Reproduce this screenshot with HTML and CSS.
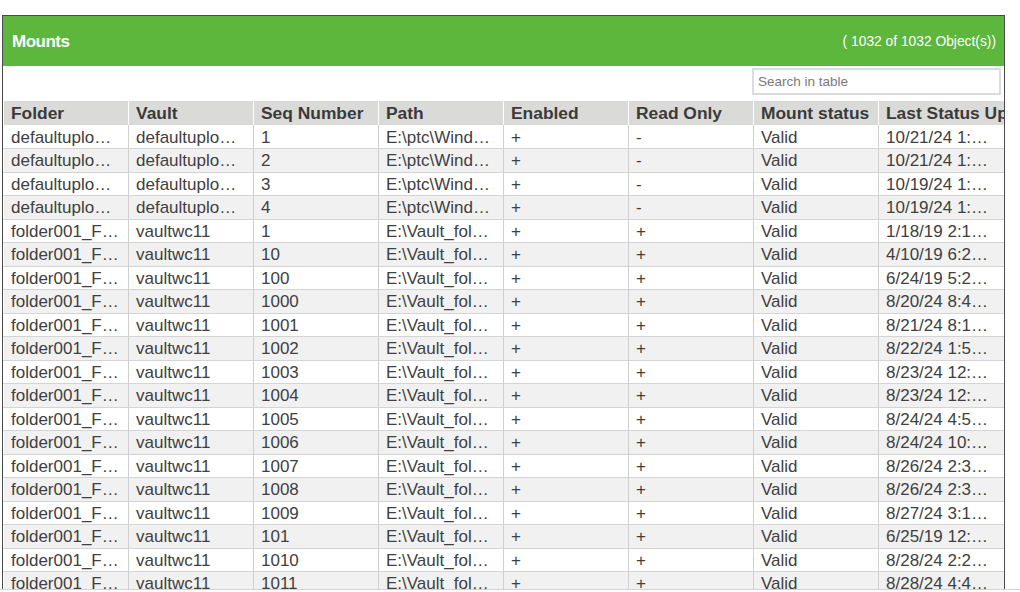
FILE: index.html
```html
<!DOCTYPE html>
<html>
<head>
<meta charset="utf-8">
<link rel="stylesheet" href="styles.css">
</head>
<body>
<div class="viewport">
  <div class="panel">
    <div class="panel-head">
      <span class="title">Mounts</span>
      <span class="count">( 1032 of 1032 Object(s))</span>
    </div>
    <div class="toolbar">
      <input class="search" type="text" placeholder="Search in table">
    </div>
    <div class="table-wrap">
      <table class="grid">
        <colgroup>
          <col><col><col><col><col><col><col><col>
        </colgroup>
        <thead>
          <tr>
            <th>Folder</th><th>Vault</th><th>Seq Number</th><th>Path</th><th>Enabled</th><th>Read Only</th><th>Mount status</th><th class="last">Last Status Update</th>
          </tr>
        </thead>
        <tbody>
          <tr><td>defaultuploadfolder</td><td>defaultuploadvault</td><td>1</td><td>E:\ptc\Windchill\vaults</td><td>+</td><td>-</td><td>Valid</td><td>10/21/24 1:15 PM</td></tr>
          <tr><td>defaultuploadfolder</td><td>defaultuploadvault</td><td>2</td><td>E:\ptc\Windchill\vaults</td><td>+</td><td>-</td><td>Valid</td><td>10/21/24 1:15 PM</td></tr>
          <tr><td>defaultuploadfolder</td><td>defaultuploadvault</td><td>3</td><td>E:\ptc\Windchill\vaults</td><td>+</td><td>-</td><td>Valid</td><td>10/19/24 1:15 PM</td></tr>
          <tr><td>defaultuploadfolder</td><td>defaultuploadvault</td><td>4</td><td>E:\ptc\Windchill\vaults</td><td>+</td><td>-</td><td>Valid</td><td>10/19/24 1:15 PM</td></tr>
          <tr><td>folder001_Folder</td><td>vaultwc11</td><td>1</td><td>E:\Vault_folder001</td><td>+</td><td>+</td><td>Valid</td><td>1/18/19 2:10 PM</td></tr>
          <tr><td>folder001_Folder</td><td>vaultwc11</td><td>10</td><td>E:\Vault_folder001</td><td>+</td><td>+</td><td>Valid</td><td>4/10/19 6:20 PM</td></tr>
          <tr><td>folder001_Folder</td><td>vaultwc11</td><td>100</td><td>E:\Vault_folder001</td><td>+</td><td>+</td><td>Valid</td><td>6/24/19 5:20 PM</td></tr>
          <tr><td>folder001_Folder</td><td>vaultwc11</td><td>1000</td><td>E:\Vault_folder001</td><td>+</td><td>+</td><td>Valid</td><td>8/20/24 8:40 AM</td></tr>
          <tr><td>folder001_Folder</td><td>vaultwc11</td><td>1001</td><td>E:\Vault_folder001</td><td>+</td><td>+</td><td>Valid</td><td>8/21/24 8:10 AM</td></tr>
          <tr><td>folder001_Folder</td><td>vaultwc11</td><td>1002</td><td>E:\Vault_folder001</td><td>+</td><td>+</td><td>Valid</td><td>8/22/24 1:50 PM</td></tr>
          <tr><td>folder001_Folder</td><td>vaultwc11</td><td>1003</td><td>E:\Vault_folder001</td><td>+</td><td>+</td><td>Valid</td><td>8/23/24 12:10 PM</td></tr>
          <tr><td>folder001_Folder</td><td>vaultwc11</td><td>1004</td><td>E:\Vault_folder001</td><td>+</td><td>+</td><td>Valid</td><td>8/23/24 12:40 PM</td></tr>
          <tr><td>folder001_Folder</td><td>vaultwc11</td><td>1005</td><td>E:\Vault_folder001</td><td>+</td><td>+</td><td>Valid</td><td>8/24/24 4:50 AM</td></tr>
          <tr><td>folder001_Folder</td><td>vaultwc11</td><td>1006</td><td>E:\Vault_folder001</td><td>+</td><td>+</td><td>Valid</td><td>8/24/24 10:20 PM</td></tr>
          <tr><td>folder001_Folder</td><td>vaultwc11</td><td>1007</td><td>E:\Vault_folder001</td><td>+</td><td>+</td><td>Valid</td><td>8/26/24 2:30 AM</td></tr>
          <tr><td>folder001_Folder</td><td>vaultwc11</td><td>1008</td><td>E:\Vault_folder001</td><td>+</td><td>+</td><td>Valid</td><td>8/26/24 2:30 PM</td></tr>
          <tr><td>folder001_Folder</td><td>vaultwc11</td><td>1009</td><td>E:\Vault_folder001</td><td>+</td><td>+</td><td>Valid</td><td>8/27/24 3:10 AM</td></tr>
          <tr><td>folder001_Folder</td><td>vaultwc11</td><td>101</td><td>E:\Vault_folder001</td><td>+</td><td>+</td><td>Valid</td><td>6/25/19 12:10 PM</td></tr>
          <tr><td>folder001_Folder</td><td>vaultwc11</td><td>1010</td><td>E:\Vault_folder001</td><td>+</td><td>+</td><td>Valid</td><td>8/28/24 2:20 AM</td></tr>
          <tr><td>folder001_Folder</td><td>vaultwc11</td><td>1011</td><td>E:\Vault_folder001</td><td>+</td><td>+</td><td>Valid</td><td>8/28/24 4:40 AM</td></tr>
          <tr><td>folder001_Folder</td><td>vaultwc11</td><td>1012</td><td>E:\Vault_folder001</td><td>+</td><td>+</td><td>Valid</td><td>8/28/24 5:40 AM</td></tr>
        </tbody>
      </table>
    </div>
  </div>
</div>
</body>
</html>
```
FILE: styles.css
```css
html, body {
  margin: 0;
  padding: 0;
  background: #ffffff;
  font-family: "Liberation Sans", Arial, sans-serif;
  color: #333333;
}
.viewport {
  height: 589px;
  overflow: hidden;
  border-bottom: 1px solid #d2d2d2;
  box-sizing: content-box;
}
.panel {
  margin: 15px 0 0 2px;
  width: 1003px;
  border: 1px solid #4a4a4a;
  border-bottom: none;
  height: 600px;
  box-sizing: border-box;
}
.panel-head {
  height: 50px;
  background: #5cb73c;
  display: flex;
  align-items: center;
  justify-content: space-between;
  padding: 1px 8px 0 9px;
  box-sizing: border-box;
  color: #ffffff;
}
.title {
  font-weight: bold;
  font-size: 17px;
  letter-spacing: -0.5px;
}
.count {
  font-size: 13.8px;
}
.toolbar {
  display: flex;
  justify-content: flex-end;
  padding: 2px 3px 0 0;
  height: 34px;
  box-sizing: border-box;
}
.search {
  width: 249px;
  height: 27px;
  box-sizing: border-box;
  border: 2px solid #dcdcdc;
  padding: 0 4px;
  font-family: "Liberation Sans", Arial, sans-serif;
  font-size: 13.5px;
  color: #333;
  outline: none;
}
.search::placeholder {
  color: #7a7a7a;
}
.table-wrap {
  margin: 1px 0 0 0;
  overflow: hidden;
  width: 1001px;
}
.grid {
  border-collapse: collapse;
  table-layout: fixed;
  width: 1000px;
  font-size: 17px;
}
.grid col {
  width: 125px;
}
.grid th {
  background: #dadad8;
  text-align: left;
  font-weight: bold;
  font-size: 17.4px;
  color: #3a3a3a;
  height: 24px;
  padding: 1px 0 0 7px;
  box-sizing: border-box;
  white-space: nowrap;
  overflow: hidden;
  border-left: 1px solid #ffffff;
  line-height: 23px;
}
.grid th.last {
  overflow: visible;
}
.grid td {
  height: 23.5px;
  padding: 2px 8px 0 7px;
  line-height: 20px;
  white-space: nowrap;
  overflow: hidden;
  text-overflow: ellipsis;
  border-left: 1px solid #cfcfcf;
  border-bottom: 1px solid #d4d4d4;
  box-sizing: border-box;
  color: #404040;
}
.grid td:first-child {
  border-left: 1px solid #ffffff;
}
.grid tbody tr:nth-child(even) td {
  background: #f1f1f1;
}
```
